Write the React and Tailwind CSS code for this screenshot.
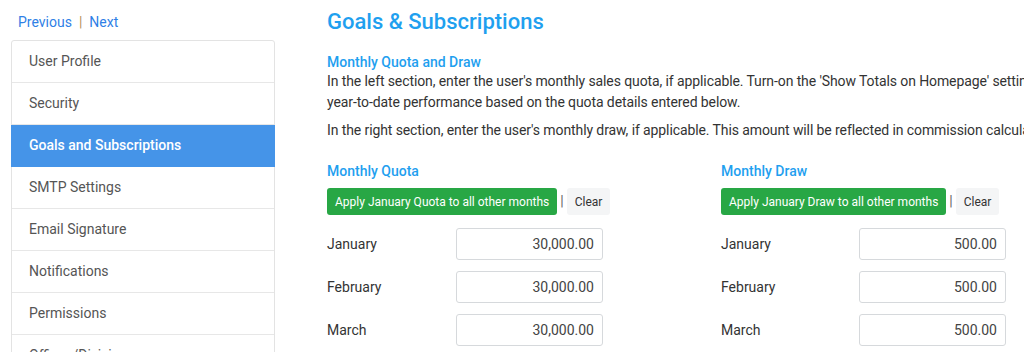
import { useState } from "react";

const menuItems = [
  "User Profile",
  "Security",
  "Goals and Subscriptions",
  "SMTP Settings",
  "Email Signature",
  "Notifications",
  "Permissions",
  "Offices/Divisions",
];

const months = ["January", "February", "March", "April", "May"];

function MonthColumn({ title, applyLabel, value, inputOffset }) {
  return (
    <div className="w-[394px] shrink-0">
      <h3 className="text-[14px] leading-5 font-medium text-[#1fa0ef] h-5">{title}</h3>
      <div className="flex items-center mt-[7px] h-[27px]">
        <button className="h-[27px] px-2 rounded-[3px] bg-[#28a745] text-white text-[12px] leading-none">
          {applyLabel}
        </button>
        <span className="mx-[3px] text-[#666] text-[14px]">|</span>
        <button className="h-[27px] px-2 rounded-[3px] bg-[#f4f5f6] text-[#333] text-[12px] leading-none">
          Clear
        </button>
      </div>
      <div className="mt-[13px] flex flex-col gap-[11px]">
        {months.map((m) => (
          <div key={m} className="flex items-center h-[32px]">
            <label className={`${inputOffset} shrink-0 text-[14px] text-[#333]`}>{m}</label>
            <input
              type="text"
              defaultValue={value}
              className="w-[147px] h-[32px] border border-[#d6d9dc] rounded-[3px] text-right pr-2 text-[14px] text-[#444] outline-none"
            />
          </div>
        ))}
      </div>
    </div>
  );
}

export default function App() {
  const [active, setActive] = useState("Goals and Subscriptions");

  return (
    <div
      className="w-[1024px] h-[352px] overflow-hidden bg-white flex"
      style={{ fontFamily: "Roboto, 'Liberation Sans', sans-serif" }}
    >
      <div className="pl-[11px] w-[275px] shrink-0">
        <div className="h-[40px] pl-[7px] pt-[12px] text-[14px] leading-5 text-[#2f7fe6]">
          <a href="#">Previous</a>
          <span className="mx-[7px] text-[#b8925a]">|</span>
          <a href="#">Next</a>
        </div>
        <ul className="w-[264px] border border-[#e3e3e3] rounded-t-[3px]">
          {menuItems.map((item) => (
            <li
              key={item}
              onClick={() => setActive(item)}
              className={
                item === active
                  ? "h-[42px] flex items-center pl-[17px] text-[14px] bg-[#4594e8] text-white font-medium -mx-px px-[1px] border-b border-[#4594e8]"
                  : "h-[42px] flex items-center pl-[17px] text-[14px] text-[#555] border-b border-[#e7e7e7]"
              }
            >
              <span className={item === active ? "pl-[1px]" : ""}>{item}</span>
            </li>
          ))}
        </ul>
      </div>

      <div className="ml-[52px] flex-1 min-w-0">
        <h1 className="mt-[8px] text-[22px] leading-7 font-medium text-[#1fa0ef]">Goals &amp; Subscriptions</h1>
        <h2 className="mt-[16px] h-[19px] text-[14px] leading-5 font-medium text-[#1fa0ef]">Monthly Quota and Draw</h2>
        <p className="text-[14px] leading-[21px] text-[#333] whitespace-nowrap tracking-[-0.1px]">
          <span className="block">
            In the left section, enter the user's monthly sales quota, if applicable. Turn-on the 'Show Totals on Homepage' setting to display the user's
          </span>
          <span className="block">year-to-date performance based on the quota details entered below.</span>
        </p>
        <p className="mt-[7px] text-[14px] leading-[21px] text-[#333] whitespace-nowrap tracking-[-0.1px]">
          In the right section, enter the user's monthly draw, if applicable. This amount will be reflected in commission calculations.
        </p>
        <div className="mt-[20px] flex">
          <MonthColumn
            title="Monthly Quota"
            applyLabel="Apply January Quota to all other months"
            value="30,000.00"
            inputOffset="w-[129px]"
          />
          <MonthColumn
            title="Monthly Draw"
            applyLabel="Apply January Draw to all other months"
            value="500.00"
            inputOffset="w-[138px]"
          />
        </div>
      </div>
    </div>
  );
}
